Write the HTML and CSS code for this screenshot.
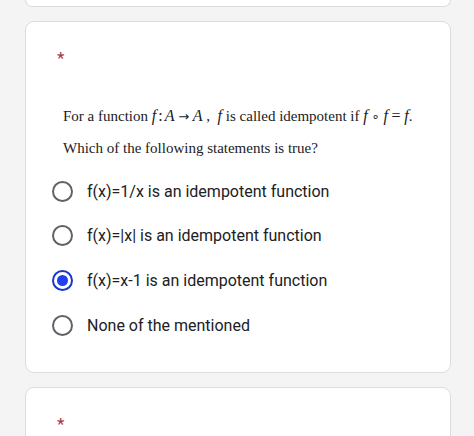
FILE: index.html
```html
<!DOCTYPE html>
<html lang="en">
<head>
    <meta charset="UTF-8">
    <meta name="viewport" content="width=device-width, initial-scale=1.0">
    <title>Quiz</title>
    <link rel="stylesheet" href="styles.css">
</head>
<body>
    <div class="page">
        <div class="card card-stub"></div>

        <div class="card question">
            <div class="required">*</div>
            <div class="prompt">
                <p>For a function <i>f</i><span class="op colon">:</span><i>A</i> <span class="op sym">&rarr;</span> <i>A</i> ,&#8194;<i>f</i> is called idempotent if <i>f</i> <span class="op sym">&#8728;</span> <i>f</i> <span class="op">=</span> <i>f</i>.</p>
                <p>Which of the following statements is true?</p>
            </div>
            <div class="options">
                <label class="option">
                    <span class="radio"></span>
                    <span class="option-text">f(x)=1/x is an idempotent function</span>
                </label>
                <label class="option">
                    <span class="radio"></span>
                    <span class="option-text">f(x)=|x| is an idempotent function</span>
                </label>
                <label class="option">
                    <span class="radio checked"></span>
                    <span class="option-text">f(x)=x-1 is an idempotent function</span>
                </label>
                <label class="option">
                    <span class="radio"></span>
                    <span class="option-text">None of the mentioned</span>
                </label>
            </div>
        </div>

        <div class="card question">
            <div class="required">*</div>
        </div>
    </div>
</body>
</html>
```

FILE: styles.css
```css
body {
    margin: 0;
    padding: 0;
    background-color: #f4f4f4;
    font-family: Roboto, "Liberation Sans", sans-serif;
}

.page {
    margin: 0 23px 0 25px;
    overflow: hidden;
    height: 436px;
}

.card {
    background-color: #fff;
    border: 1px solid #dcdcdc;
    border-radius: 9px;
    box-sizing: border-box;
}

.card-stub {
    height: 7px;
    border-top: none;
    border-radius: 0 0 9px 9px;
}

.question {
    margin-top: 14px;
    padding: 26px 0 25px;
}

.question:last-child {
    min-height: 60px;
}

.required {
    color: #a1344a;
    font-size: 17px;
    line-height: 20px;
    margin-left: 31px;
}

.prompt {
    margin: 38px 0 0 37px;
    font-family: "Liberation Serif", serif;
    font-size: 15px;
    color: #202124;
}

.prompt p {
    margin: 0;
    line-height: 20px;
}

.prompt p + p {
    margin-top: 12px;
}

.prompt i {
    font-size: 16px;
    line-height: 1;
}

.op {
    font-size: 16px;
    line-height: 1;
}

.op.colon {
    margin: 0 2px;
}

.op.sym {
    font-family: "DejaVu Sans", sans-serif;
    font-size: 13px;
}

.options {
    margin: 11px 0 0 26px;
}

.option {
    display: flex;
    align-items: center;
    height: 44.6px;
}

.radio {
    width: 21px;
    height: 21px;
    border: 2px solid #5f6368;
    border-radius: 50%;
    box-sizing: border-box;
    position: relative;
    flex-shrink: 0;
}

.radio.checked {
    border-color: #1a36c9;
}

.radio.checked::after {
    content: "";
    position: absolute;
    left: 3px;
    top: 3px;
    width: 11px;
    height: 11px;
    border-radius: 50%;
    background-color: #1f3ff0;
}

.option-text {
    margin-left: 14px;
    font-size: 16px;
    color: #202124;
}
```
